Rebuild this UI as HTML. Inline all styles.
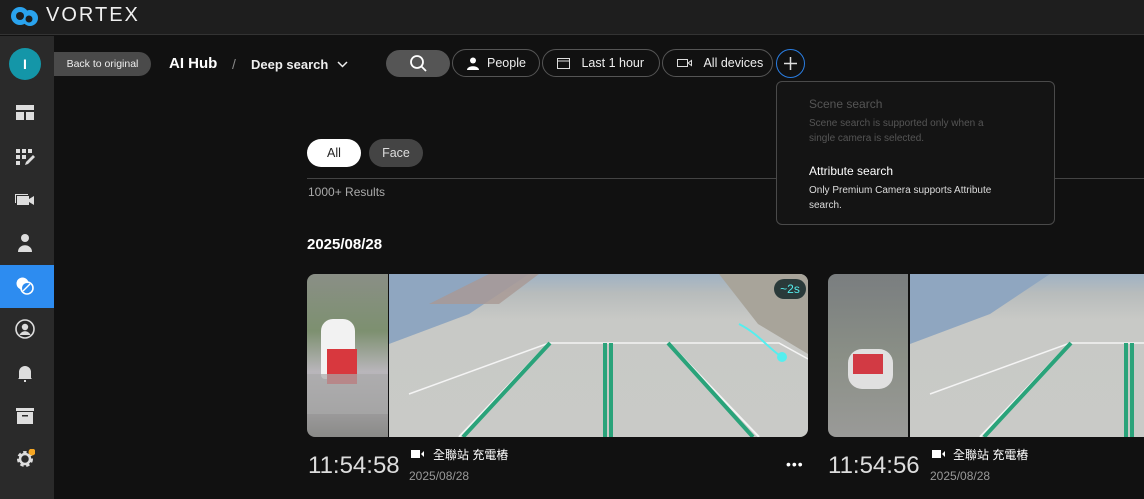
<!DOCTYPE html>
<html><head><meta charset="utf-8"><style>
*{margin:0;padding:0;box-sizing:border-box}
body{width:1144px;height:499px;overflow:hidden;background:#111;font-family:"Liberation Sans","Noto Sans CJK TC",sans-serif;color:#fff;position:relative}
.top{position:absolute;left:0;top:0;width:1144px;height:35px;background:#1e1e1e;border-bottom:1px solid #333}
.side{position:absolute;left:0;top:36px;width:54px;height:463px;background:#2a2a2a}
.ab{position:absolute}
.pill{position:absolute;top:49px;height:28px;border:1px solid #555;border-radius:14px;font-size:12.5px;display:flex;align-items:center;gap:8px;padding-left:14px;color:#eee}
.ico{position:absolute;left:15px;width:20px;height:20px}
.img{position:absolute;top:274px;height:163px;border-radius:8px;overflow:hidden}
.scene{position:absolute;top:0;height:163px;background:linear-gradient(180deg,#9fb2c4 0%,#b8bcbc 12%,#c8c9c6 28%,#c9cac7 100%)}
</style></head><body>
<div class="top"></div>
<svg class="ab" style="left:9px;top:4px" width="32" height="24" viewBox="0 0 32 24"><circle cx="11" cy="12" r="9" fill="#2aa3ee"/><circle cx="21" cy="14" r="8" fill="#2aa3ee"/><circle cx="11" cy="12" r="4" fill="#1e1e1e"/><circle cx="20" cy="15" r="3.5" fill="#1e1e1e"/></svg>
<div class="ab" style="left:46px;top:4px;font-size:20px;letter-spacing:2px;color:#f0f0f0">VORTEX</div>
<div class="side"></div>
<div class="ab" style="left:9px;top:48px;width:32px;height:32px;border-radius:50%;background:#1496a8;font-size:14px;font-weight:bold;text-align:center;line-height:32px">I</div>
<div class="ab" style="left:54px;top:52px;width:97px;height:24px;background:#4a4a4a;border-radius:0 12px 12px 0;font-size:10.5px;line-height:24px;text-align:center;color:#eee">Back to original</div>
<div class="ab" style="left:169px;top:55px;font-size:15px;font-weight:bold">AI Hub</div>
<div class="ab" style="left:232px;top:56px;font-size:14px;color:#888">/</div>
<div class="ab" style="left:251px;top:57px;font-size:13px;font-weight:bold;color:#eee">Deep search</div>
<svg class="ab" style="left:337px;top:61px" width="11" height="7" viewBox="0 0 11 7"><path d="M1 1l4.5 4.5L10 1" fill="none" stroke="#eee" stroke-width="1.5"/></svg>
<div class="ab" style="left:386px;top:50px;width:64px;height:27px;background:#555;border-radius:14px"></div>
<svg class="ab" style="left:409px;top:54px" width="20" height="20" viewBox="0 0 20 20"><circle cx="8" cy="8" r="6" fill="none" stroke="#fff" stroke-width="1.8"/><path d="M12.5 12.5L17 17" stroke="#fff" stroke-width="1.8"/></svg>
<div class="pill" style="left:452px;width:88px"><svg width="12" height="13" viewBox="0 0 12 13"><circle cx="6" cy="3.5" r="3" fill="#fff"/><path d="M0 13C0 8 12 8 12 13Z" fill="#fff"/></svg>People</div>
<div class="pill" style="left:542px;width:118px"><svg width="13" height="12" viewBox="0 0 13 12"><rect x="0.5" y="1.5" width="12" height="10" fill="none" stroke="#ddd"/><path d="M0.5 4h12" stroke="#ddd"/></svg>&nbsp;Last 1 hour</div>
<div class="pill" style="left:662px;width:111px"><svg width="15" height="10" viewBox="0 0 15 10"><rect x="0.5" y="1.5" width="10" height="7" fill="none" stroke="#ddd"/><path d="M11 5l3.5-2.5v5z" fill="none" stroke="#ddd"/></svg>&nbsp;All devices</div>
<div class="ab" style="left:776px;top:49px;width:29px;height:29px;border:1.5px solid #2a7de1;border-radius:50%"></div>
<svg class="ab" style="left:783px;top:56px" width="15" height="15" viewBox="0 0 15 15"><path d="M7.5 1v13M1 7.5h13" stroke="#ddd" stroke-width="1.5"/></svg>
<svg class="ico" style="top:103px" viewBox="0 0 20 20"><rect x="1" y="2" width="18" height="5" fill="#ddd"/><rect x="1" y="9" width="8" height="8" fill="#ddd"/><rect x="11" y="9" width="8" height="8" fill="#ddd"/></svg>
<svg class="ico" style="top:147px" viewBox="0 0 20 20" fill="#ddd"><rect x="1" y="2" width="4" height="4"/><rect x="7" y="2" width="4" height="4"/><rect x="13" y="2" width="4" height="4"/><rect x="1" y="8" width="4" height="4"/><rect x="7" y="8" width="4" height="4"/><rect x="1" y="14" width="4" height="4"/><path d="M10 18l1-3 7-7 2 2-7 7z"/></svg>
<svg class="ico" style="top:190px" viewBox="0 0 20 20" fill="#ddd"><path d="M0 4h13v1H1v8H0z"/><rect x="2" y="6" width="12" height="9"/><path d="M14 9l5-3v9l-5-3z"/></svg>
<svg class="ico" style="top:233px" viewBox="0 0 20 20" fill="#ddd"><circle cx="10" cy="5" r="4"/><path d="M3 19c0-9 14-9 14 0z"/></svg>
<div class="ab" style="left:0;top:265px;width:54px;height:43px;background:#2d8cf0"></div>
<svg class="ico" style="top:276px" viewBox="0 0 20 20"><circle cx="7.5" cy="7.5" r="6" fill="#fff"/><circle cx="12" cy="12" r="6" fill="none" stroke="#fff" stroke-width="1.6"/><circle cx="12" cy="12" r="5" fill="#2d8cf0"/><path d="M8 15l7-7" stroke="#fff" stroke-width="1.4"/></svg>
<svg class="ico" style="top:319px" viewBox="0 0 20 20"><circle cx="10" cy="10" r="9" fill="none" stroke="#ddd" stroke-width="1.6"/><circle cx="10" cy="8" r="3.2" fill="#ddd"/><path d="M4.5 16c2-5 9-5 11 0" fill="#ddd"/></svg>
<svg class="ico" style="top:363px" viewBox="0 0 20 20" fill="#ddd"><path d="M4 15V9a6 6 0 0 1 12 0v6l1 1H3z"/><rect x="9" y="17" width="2" height="2"/></svg>
<svg class="ico" style="top:406px" viewBox="0 0 20 20" fill="#ddd"><rect x="1" y="2" width="18" height="3"/><path d="M2 6h16v12H2z"/><rect x="7" y="9" width="6" height="1.5" fill="#2a2a2a"/></svg>
<svg class="ico" style="top:449px" viewBox="0 0 20 20"><circle cx="10" cy="10" r="6" fill="none" stroke="#ddd" stroke-width="4" stroke-dasharray="3 2.3"/><circle cx="10" cy="10" r="5" fill="none" stroke="#ddd" stroke-width="2.5"/><circle cx="17" cy="3" r="3.5" fill="#f5a623"/></svg>
<div class="ab" style="left:307px;top:139px;width:54px;height:28px;border-radius:14px;background:#fff;color:#222;font-size:12.5px;text-align:center;line-height:28px">All</div>
<div class="ab" style="left:369px;top:139px;width:54px;height:28px;border-radius:14px;background:#444;color:#ddd;font-size:12.5px;text-align:center;line-height:28px">Face</div>
<div class="ab" style="left:307px;top:178px;width:837px;height:1px;background:#444"></div>
<div class="ab" style="left:308px;top:185px;font-size:12px;color:#aaa">1000+ Results</div>
<div class="ab" style="left:307px;top:236px;font-size:15px;font-weight:bold">2025/08/28</div>
<div class="ab" style="left:776px;top:81px;width:279px;height:144px;background:#141414;border:1px solid #4a4a4a;border-radius:6px"></div>
<div class="ab" style="left:809px;top:97px;font-size:12px;color:#555">Scene search</div>
<div class="ab" style="left:809px;top:116px;width:200px;font-size:10px;line-height:15px;color:#555">Scene search is supported only when a single camera is selected.</div>
<div class="ab" style="left:809px;top:164px;font-size:12px;color:#fff">Attribute search</div>
<div class="ab" style="left:809px;top:183px;width:205px;font-size:10px;line-height:15px;color:#ddd">Only Premium Camera supports Attribute search.</div>
<div class="img" style="left:307px;width:501px">
<div class="scene" style="left:0;width:81px;background:linear-gradient(180deg,#8a8f86 0%,#7d9070 35%,#b9b6bb 60%,#8a8a88 100%)"></div>
<div class="ab" style="left:14px;top:45px;width:34px;height:60px;background:#f2f2f2;border-radius:12px 12px 4px 4px"></div>
<div class="ab" style="left:20px;top:75px;width:30px;height:35px;background:#d8383e"></div>
<div class="ab" style="left:0;top:100px;width:81px;height:40px;background:#aaa;opacity:.7"></div>
<div class="scene" style="left:82px;width:419px"></div>
<svg class="ab" style="left:82px;top:0" width="419" height="163" viewBox="0 0 419 163"><path d="M0 0h140l-60 40L0 70z" fill="#8fa6c0"/><path d="M100 0h50l-40 30h-70z" fill="#a99894" opacity=".8"/><path d="M330 0h89v80l-50-30z" fill="#a8a49a"/><path d="M20 120L160 69H390L419 85" fill="none" stroke="#f4f4f4" stroke-width="1.5"/><path d="M160 69L70 163M370 163L280 69" stroke="#f4f4f4" stroke-width="2"/><path d="M161 69L74 163M279 69L364 163M216 69V163M222 69V163" stroke="#2aa37a" stroke-width="4"/><path d="M350 50C370 60 380 75 393 83" stroke="#5ee" stroke-width="2" fill="none"/><circle cx="393" cy="83" r="5" fill="#5ee"/></svg>
<div class="ab" style="left:467px;top:5px;width:32px;height:20px;border-radius:10px;background:#2a3a3a;color:#5ee;font-size:12px;line-height:20px;text-align:center">~2s</div>
</div>
<div class="ab" style="left:388px;top:274px;width:1px;height:163px;background:#111"></div>
<div class="ab" style="left:308px;top:452px;font-size:24px;color:#ddd">11:54:58</div>
<svg class="ab" style="left:411px;top:449px" width="14" height="10" viewBox="0 0 14 10"><rect x="0" y="1" width="9" height="8" fill="#fff"/><path d="M10 5l3-3v6z" fill="#fff"/></svg>
<div class="ab" style="left:433px;top:446px;font-size:12px">全聯站 充電樁</div>
<div class="ab" style="left:409px;top:469px;font-size:12px;color:#999">2025/08/28</div>
<div class="ab" style="left:786px;top:456px;font-size:14px;letter-spacing:1px">•••</div>
<div class="img" style="left:828px;width:330px;border-radius:8px 0 0 8px">
<div class="scene" style="left:0;width:81px;background:linear-gradient(180deg,#7a7e80 0%,#8a8f86 50%,#9a9a98 100%)"></div>
<div class="ab" style="left:20px;top:75px;width:45px;height:40px;background:#e0e0e0;border-radius:14px"></div>
<div class="ab" style="left:25px;top:80px;width:30px;height:20px;background:#d23a44"></div>
<div class="scene" style="left:82px;width:250px"></div>
<svg class="ab" style="left:82px;top:0" width="250" height="163" viewBox="0 0 250 163"><path d="M0 0h140l-60 40L0 70z" fill="#8fa6c0"/><path d="M20 120L160 69H250" fill="none" stroke="#f4f4f4" stroke-width="1.5"/><path d="M160 69L70 163" stroke="#f4f4f4" stroke-width="2"/><path d="M161 69L74 163M216 69V163M222 69V163" stroke="#2aa37a" stroke-width="4"/></svg>
</div>
<div class="ab" style="left:908px;top:274px;width:1px;height:163px;background:#111"></div>
<div class="ab" style="left:828px;top:452px;font-size:24px;color:#ddd">11:54:56</div>
<svg class="ab" style="left:932px;top:449px" width="14" height="10" viewBox="0 0 14 10"><rect x="0" y="1" width="9" height="8" fill="#fff"/><path d="M10 5l3-3v6z" fill="#fff"/></svg>
<div class="ab" style="left:953px;top:446px;font-size:12px">全聯站 充電樁</div>
<div class="ab" style="left:930px;top:469px;font-size:12px;color:#999">2025/08/28</div>
</body></html>
